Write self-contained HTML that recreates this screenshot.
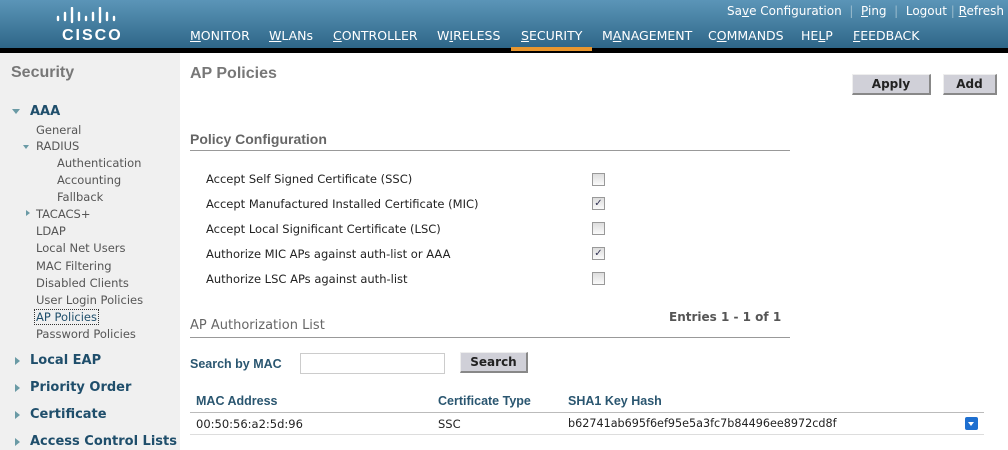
<!DOCTYPE html>
<html><head><meta charset="utf-8"><style>
*{margin:0;padding:0;box-sizing:border-box}
body{width:1008px;height:450px;overflow:hidden;background:#fff;font-family:"DejaVu Sans","Liberation Sans",sans-serif;position:relative}
.a{position:absolute;white-space:nowrap}
#hdr{position:absolute;left:0;top:0;width:1008px;height:48px;background:linear-gradient(#5b95b8,#2e6688)}
#blk{position:absolute;left:0;top:48px;width:1008px;height:5px;background:#000}
.nav{color:#fff;font-size:12.5px;top:28px}
.top{color:#fff;font-size:12px;top:4px}
u{text-decoration:underline}
#side{position:absolute;left:0;top:53px;width:180px;height:397px;background:#f0f0f0}
.s{color:#555;font-size:11.5px}
.sb{color:#1f4e6b;font-size:13px;font-weight:bold;font-family:"DejaVu Sans",sans-serif}
.tri{width:0;height:0;border-left:5px solid #6a9aa5;border-top:4px solid transparent;border-bottom:4px solid transparent}
.trid{width:0;height:0;border-top:5px solid #6a9aa5;border-left:4px solid transparent;border-right:4px solid transparent}
.h{color:#666;font-family:"Liberation Sans",sans-serif;font-weight:bold}
.lbl{color:#222;font-size:11.5px}
.cb{width:13px;height:13px;border:1px solid #999;background:linear-gradient(#ddd,#fafafa);font-size:10px;line-height:11px;text-align:center;color:#335}
.btn{background:#d0d0d8;border-top:1px solid #eee;border-left:1px solid #eee;border-right:2px solid #888;border-bottom:2px solid #888;font-weight:bold;font-size:12px;color:#222;text-align:center}
.th{color:#2a5670;font-size:12.5px;font-weight:bold;font-family:"Liberation Sans",sans-serif}
</style></head><body>
<div id="hdr"></div><div id="blk"></div>
<svg class="a" style="left:56px;top:7px" width="70" height="17"><g stroke="#fff" stroke-width="2.4" stroke-linecap="round">
<line x1="2" y1="10" x2="2" y2="13"/><line x1="9" y1="6" x2="9" y2="13"/><line x1="16" y1="1" x2="16" y2="15"/><line x1="23" y1="6" x2="23" y2="13"/><line x1="30" y1="10" x2="30" y2="13"/><line x1="37" y1="6" x2="37" y2="13"/><line x1="44" y1="1" x2="44" y2="15"/><line x1="51" y1="6" x2="51" y2="13"/><line x1="58" y1="10" x2="58" y2="13"/></g></svg>
<div class="a" style="left:62px;top:27px;color:#fff;font-weight:bold;font-size:16px;letter-spacing:2px;font-family:'Liberation Sans',sans-serif">CISCO</div>
<div class="a top" style="left:727px">Sa<u>v</u>e Configuration &nbsp;<span style="color:#9bc">|</span>&nbsp; <u>P</u>ing &nbsp;<span style="color:#9bc">|</span>&nbsp; Lo<u>g</u>out <span style="color:#9bc">|</span> <u>R</u>efresh</div>
<div class="a nav" style="left:190px"><u>M</u>ONITOR</div>
<div class="a nav" style="left:269px"><u>W</u>LANs</div>
<div class="a nav" style="left:333px"><u>C</u>ONTROLLER</div>
<div class="a nav" style="left:437px">W<u>I</u>RELESS</div>
<div class="a nav" style="left:521px"><u>S</u>ECURITY</div>
<div class="a" style="left:511px;top:47px;width:81px;height:4px;background:#e8962e"></div>
<div class="a nav" style="left:602px">M<u>A</u>NAGEMENT</div>
<div class="a nav" style="left:708px">C<u>O</u>MMANDS</div>
<div class="a nav" style="left:801px">HE<u>L</u>P</div>
<div class="a nav" style="left:853px"><u>F</u>EEDBACK</div>

<div id="side"></div>
<div class="a h" style="left:11px;top:64px;font-size:16px;color:#777">Security</div>
<div class="a trid" style="left:12px;top:109px"></div>
<div class="a sb" style="left:30px;top:104px">AAA</div>
<div class="a s" style="left:36px;top:123px">General</div>
<div class="a trid" style="left:23px;top:145px;border-top-width:4px;border-left-width:3px;border-right-width:3px"></div>
<div class="a s" style="left:36px;top:139px">RADIUS</div>
<div class="a s" style="left:57px;top:156px">Authentication</div>
<div class="a s" style="left:57px;top:173px">Accounting</div>
<div class="a s" style="left:57px;top:190px">Fallback</div>
<div class="a tri" style="left:26px;top:210px;border-left-width:4px;border-top-width:3.5px;border-bottom-width:3.5px"></div>
<div class="a s" style="left:36px;top:207px">TACACS+</div>
<div class="a s" style="left:36px;top:224px">LDAP</div>
<div class="a s" style="left:36px;top:241px">Local Net Users</div>
<div class="a s" style="left:36px;top:259px">MAC Filtering</div>
<div class="a s" style="left:36px;top:276px">Disabled Clients</div>
<div class="a s" style="left:36px;top:293px">User Login Policies</div>
<div class="a s" style="left:34px;top:309px;border:1px dotted #333;padding:0 1px;color:#1f4e6b">AP Policies</div>
<div class="a s" style="left:36px;top:327px">Password Policies</div>
<div class="a tri" style="left:15px;top:357px"></div><div class="a sb" style="left:30px;top:353px">Local EAP</div>
<div class="a tri" style="left:15px;top:384px"></div><div class="a sb" style="left:30px;top:380px">Priority Order</div>
<div class="a tri" style="left:15px;top:411px"></div><div class="a sb" style="left:30px;top:407px">Certificate</div>
<div class="a tri" style="left:15px;top:438px"></div><div class="a sb" style="left:30px;top:434px">Access Control Lists</div>

<div class="a h" style="left:190px;top:65px;font-size:16px;color:#777">AP Policies</div>
<div class="a btn" style="left:852px;top:74px;width:79px;height:21px;line-height:19px">Apply</div>
<div class="a btn" style="left:943px;top:74px;width:54px;height:21px;line-height:19px">Add</div>

<div class="a h" style="left:190px;top:131px;font-size:14px">Policy Configuration</div>
<div class="a" style="left:190px;top:150px;width:600px;height:1px;background:#999"></div>
<div class="a lbl" style="left:206px;top:172px">Accept Self Signed Certificate (SSC)</div>
<div class="a lbl" style="left:206px;top:197px">Accept Manufactured Installed Certificate (MIC)</div>
<div class="a lbl" style="left:206px;top:222px">Accept Local Significant Certificate (LSC)</div>
<div class="a lbl" style="left:206px;top:247px">Authorize MIC APs against auth-list or AAA</div>
<div class="a lbl" style="left:206px;top:272px">Authorize LSC APs against auth-list</div>
<div class="a cb" style="left:592px;top:173px"></div>
<div class="a cb" style="left:592px;top:197px">✓</div>
<div class="a cb" style="left:592px;top:222px"></div>
<div class="a cb" style="left:592px;top:247px">✓</div>
<div class="a cb" style="left:592px;top:272px"></div>

<div class="a" style="left:669px;top:310px;font-size:12px;color:#555;font-weight:bold">Entries 1 - 1 of 1</div>
<div class="a" style="left:190px;top:318px;font-size:13px;color:#666">AP Authorization List</div>
<div class="a" style="left:190px;top:337px;width:600px;height:1px;background:#999"></div>
<div class="a th" style="left:190px;top:357px;font-size:12.5px">Search by MAC</div>
<div class="a" style="left:300px;top:353px;width:145px;height:21px;border:1px solid #ccc;background:#fff"></div>
<div class="a btn" style="left:460px;top:352px;width:68px;height:21px;line-height:19px">Search</div>
<div class="a th" style="left:196px;top:394px">MAC Address</div>
<div class="a th" style="left:438px;top:394px">Certificate Type</div>
<div class="a th" style="left:568px;top:394px">SHA1 Key Hash</div>
<div class="a" style="left:190px;top:412px;width:794px;height:1px;background:#bbb"></div>
<div class="a lbl" style="left:196px;top:417px">00:50:56:a2:5d:96</div>
<div class="a lbl" style="left:438px;top:417px">SSC</div>
<div class="a lbl" style="left:568px;top:417px;font-size:11.2px">b62741ab695f6ef95e5a3fc7b84496ee8972cd8f</div>
<div class="a" style="left:965px;top:417px;width:13px;height:13px;background:#1e6fd0;border-radius:2px"></div>
<div class="a" style="left:968px;top:422px;width:0;height:0;border-top:4px solid #fff;border-left:3.5px solid transparent;border-right:3.5px solid transparent"></div>
<div class="a" style="left:190px;top:434px;width:794px;height:1px;background:#ddd"></div>
</body></html>
